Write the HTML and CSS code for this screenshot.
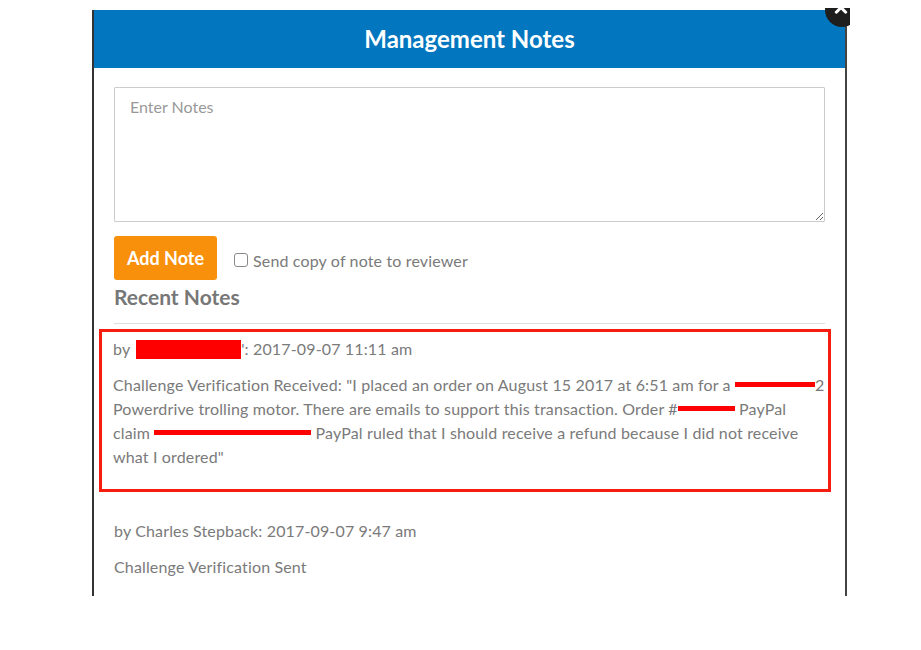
FILE: index.html
```html
<!DOCTYPE html>
<html>
<head>
<meta charset="utf-8">
<link rel="stylesheet" href="styles.css">
</head>
<body>
<div class="page">
  <div class="modal">
    <div class="close"><span class="x1"></span><span class="x2"></span></div>
    <div class="header">Management Notes</div>
    <div class="body">
      <textarea class="notes" placeholder="Enter Notes"></textarea>
      <div class="actions">
        <button class="add">Add Note</button>
        <label class="send"><input type="checkbox" class="check">Send copy of note to reviewer</label>
      </div>
      <h2 class="recent">Recent Notes</h2>
      <div class="rule"></div>
      <div class="note highlight">
        <div class="meta">by <span class="redact name"></span>': 2017-09-07 11:11 am</div>
        <div class="text">Challenge Verification Received: "I placed an order on August 15 2017 at 6:51 am for a <span class="redact bar b1"></span>2<br>Powerdrive trolling motor. There are emails to support this transaction. Order #<span class="redact bar b2"></span> PayPal<br>claim <span class="redact bar b3"></span> PayPal ruled that I should receive a refund because I did not receive<br>what I ordered"</div>
      </div>
      <div class="note">
        <div class="meta">by Charles Stepback: 2017-09-07 9:47 am</div>
        <div class="text">Challenge Verification Sent</div>
      </div>
    </div>
  </div>
</div>
</body>
</html>
```

FILE: styles.css
```css
html, body {
  margin: 0;
  padding: 0;
  background: #ffffff;
}

.page {
  padding: 10px 0 0 92px;
  font-family: Lato, "Open Sans", sans-serif;
}

.modal {
  position: relative;
  width: 751px;
  height: 586px;
  border-left: 2px solid #333333;
  border-right: 2px solid #444444;
  background: #ffffff;
}

.close {
  position: absolute;
  left: 731px;
  top: -17px;
  width: 34px;
  height: 34px;
  border-radius: 50%;
  background: #1e1e1e;
  clip-path: inset(15px 9px 0 0);
  z-index: 2;
}

.close .x1,
.close .x2 {
  position: absolute;
  left: 8px;
  top: 13px;
  width: 16px;
  height: 3px;
  background: #ffffff;
  border-radius: 1px;
}

.close .x1 { transform: rotate(45deg); }
.close .x2 { transform: rotate(-45deg); }

.header {
  height: 58px;
  background: #0277c0;
  color: #ffffff;
  font-weight: 700;
  font-size: 24px;
  display: flex;
  align-items: center;
  justify-content: center;
  padding-bottom: 2px;
  box-sizing: border-box;
}

.body {
  padding: 19px 20px 0 20px;
  color: #7a7a7a;
}

.notes {
  display: block;
  box-sizing: border-box;
  width: 100%;
  height: 135px;
  border: 1px solid #cccccc;
  border-radius: 1px;
  padding: 9px 15px;
  font-family: inherit;
  font-size: 16px;
  color: #555555;
  resize: vertical;
  margin: 0;
}

.notes::placeholder {
  color: #999999;
}

.actions {
  display: flex;
  align-items: center;
  margin-top: 14px;
  gap: 17px;
}

.add {
  width: 103px;
  height: 44px;
  border: none;
  border-radius: 3px;
  background: #f9900c;
  color: #ffffff;
  font-family: inherit;
  font-weight: 700;
  font-size: 18px;
  padding: 0;
}

.send {
  display: flex;
  align-items: center;
  font-size: 16px;
  letter-spacing: 0.15px;
  color: #7a7a7a;
  margin-top: 4px;
}

.check {
  appearance: none;
  -webkit-appearance: none;
  width: 14px;
  height: 14px;
  border: 1px solid #8a8a8a;
  border-radius: 3px;
  margin: 0 5px 0 0;
  background: #ffffff;
}

.recent {
  margin: 5px 0 0 0;
  font-size: 21px;
  line-height: 24px;
  font-weight: 700;
  color: #777777;
}

.rule {
  height: 1px;
  background: #dddddd;
  margin-top: 14px;
}

.note {
  font-size: 16px;
  line-height: 24px;
  letter-spacing: 0.15px;
  color: #7a7a7a;
}

.highlight {
  margin: 5px -6px 0 -15px;
  border: 3px solid #f51d0d;
  padding: 5px 0 20px 11px;
}

.note + .note {
  margin-top: 27px;
}

.note .text {
  margin-top: 12px;
}

.redact {
  display: inline-block;
  background: #ff0000;
}

.name {
  width: 105px;
  height: 19px;
  vertical-align: -4px;
  margin-left: 2px;
}

.bar {
  height: 5px;
  vertical-align: 4px;
}

.b1 { width: 80px; }
.b2 { width: 57px; }
.b3 { width: 157px; }
```
